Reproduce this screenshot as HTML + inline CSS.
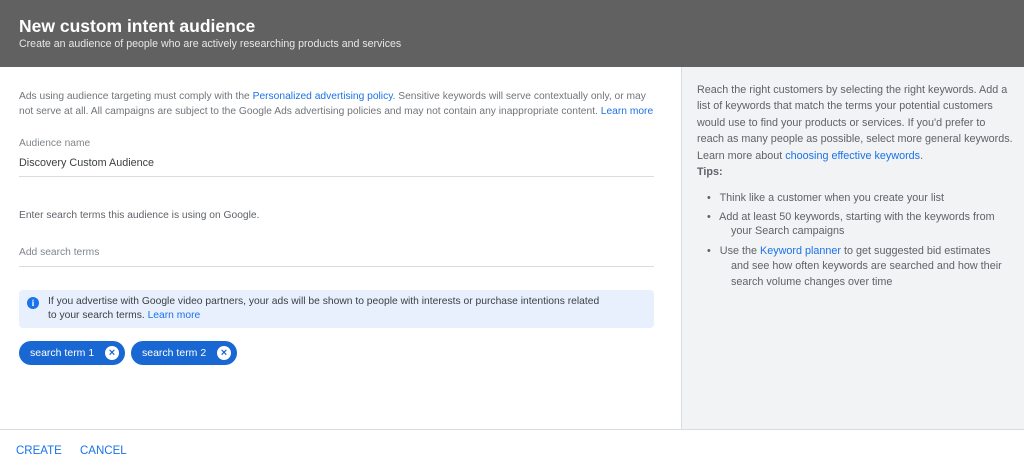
<!DOCTYPE html>
<html><head><style>
body{margin:0;width:1024px;height:471px;overflow:hidden;background:#fff;font-family:"Liberation Sans",Arial,sans-serif;position:relative}
.a{position:absolute;white-space:nowrap}
a{color:#1a73e8;text-decoration:none}
#hd{position:absolute;left:0;top:0;width:1024px;height:67px;background:#616161}
#rp{position:absolute;left:681px;top:67px;width:343px;height:362px;background:#f1f3f4;border-left:1px solid #dadce0}
.g{color:#70757a;font-size:10.25px}
.r{color:#5f6368;font-size:10.8px;line-height:16.4px}
.line{position:absolute;left:19px;width:635px;height:1px;background:#dadce0}
.chip{position:absolute;top:341px;height:24px;border-radius:12px;background:#1967d2;color:#fff;font-size:10.5px;line-height:24px;padding-left:11px;box-sizing:border-box}
.chip i{position:absolute;right:6px;top:5px;width:14px;height:14px;border-radius:50%;background:#fff;color:#1967d2;font-style:normal;font-size:11px;line-height:14px;text-align:center;font-weight:bold}
</style></head><body>
<div id="hd"></div>
<div class="a" style="left:19px;top:16px;font-size:17.5px;color:#fff;font-weight:bold">New custom intent audience</div>
<div class="a" style="left:19px;top:38px;font-size:10.6px;color:#e8e8e8">Create an audience of people who are actively researching products and services</div>
<div id="rp"></div>
<div class="a g" style="left:19px;top:89px;line-height:15px">Ads using audience targeting must comply with the <a>Personalized advertising policy</a>. Sensitive keywords will serve contextually only, or may<br>not serve at all. All campaigns are subject to the Google Ads advertising policies and may not contain any inappropriate content. <a>Learn more</a></div>
<div class="a g" style="left:19px;top:138px;color:#80868b">Audience name</div>
<div class="a" style="left:19px;top:157px;font-size:10.8px;color:#3c4043">Discovery Custom Audience</div>
<div class="line" style="top:176px"></div>
<div class="a g" style="left:19px;top:210px;color:#5f6368">Enter search terms this audience is using on Google.</div>
<div class="a g" style="left:19px;top:247px;color:#80868b">Add search terms</div>
<div class="line" style="top:266px"></div>
<div style="position:absolute;left:19px;top:290px;width:635px;height:38px;background:#e8f0fe;border-radius:4px"></div>
<div style="position:absolute;left:27px;top:297px;width:12px;height:12px;border-radius:50%;background:#1a73e8;color:#fff;font-size:9px;line-height:12px;text-align:center;font-weight:bold;font-family:'Liberation Serif',serif">i</div>
<div class="a g" style="left:48px;top:295px;line-height:13.5px;color:#3c4043;font-size:10.3px">If you advertise with Google video partners, your ads will be shown to people with interests or purchase intentions related<br>to your search terms. <a>Learn more</a></div>
<div class="chip" style="left:19px;width:106px">search term 1<i>×</i></div>
<div class="chip" style="left:131px;width:106px">search term 2<i>×</i></div>
<div style="position:absolute;left:0;top:429px;width:1024px;height:1px;background:#dadce0"></div>
<div class="a" style="left:16px;top:445px;font-size:11.5px;color:#1a73e8">CREATE</div>
<div class="a" style="left:80px;top:445px;font-size:11.5px;color:#1a73e8">CANCEL</div>
<div class="a r" style="left:697px;top:82px">Reach the right customers by selecting the right keywords. Add a<br>list of keywords that match the terms your potential customers<br>would use to find your products or services. If you'd prefer to<br>reach as many people as possible, select more general keywords.<br>Learn more about <a>choosing effective keywords</a>.</div>
<div class="a r" style="left:697px;top:164px;font-weight:bold">Tips:</div>
<div class="a r" style="left:707px;top:190px">•&nbsp;&nbsp; Think like a customer when you create your list</div>
<div class="a r" style="left:707px;top:209px">•&nbsp;&nbsp; Add at least 50 keywords, starting with the keywords from</div>
<div class="a r" style="left:731px;top:223px">your Search campaigns</div>
<div class="a r" style="left:707px;top:243px">•&nbsp;&nbsp; Use the <a>Keyword planner</a> to get suggested bid estimates</div>
<div class="a r" style="left:731px;top:258px;line-height:16px">and see how often keywords are searched and how their<br>search volume changes over time</div>
</body></html>
